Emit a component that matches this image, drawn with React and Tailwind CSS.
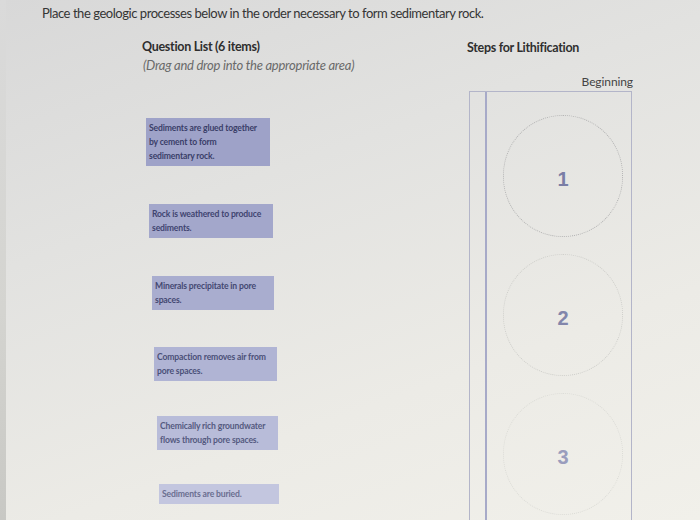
import React from "react";

const items = [
  { lines: ["Sediments are glued together", "by cement to form", "sedimentary rock."], cls: "ml-[4px] mt-[45px] w-[124px] bg-[#9ea2c8] text-[#3a3e68]" },
  { lines: ["Rock is weathered to produce", "sediments."], cls: "ml-[7px] mt-[38px] w-[124px] bg-[#a3a7cb] text-[#3f4470]" },
  { lines: ["Minerals precipitate in pore", "spaces."], cls: "ml-[10px] mt-[38px] w-[122px] bg-[#a9adcf] text-[#444872]" },
  { lines: ["Compaction removes air from", "pore spaces."], cls: "ml-[12px] mt-[37px] w-[123px] bg-[#b0b4d4] text-[#4b5078]" },
  { lines: ["Chemically rich groundwater", "flows through pore spaces."], cls: "ml-[15px] mt-[35px] w-[121px] bg-[#b8bcd9] text-[#555a80]" },
  { lines: ["Sediments are buried."], cls: "ml-[17px] mt-[34px] w-[120px] bg-[#c3c6df] text-[#6a6e90]" },
];

const steps = [
  { n: "1", ring: "border-[#b4b4b4]", num: "text-[#7a7ea6]" },
  { n: "2", ring: "border-[#cfcfcb]", num: "text-[#8286ab]" },
  { n: "3", ring: "border-[#dcdcd7]", num: "text-[#9a9dbd]" },
];

function Card({ lines, cls }) {
  return (
    <div className={`px-[3px] py-[3px] text-[8.6px] font-bold leading-[14px] tracking-[-0.15px] whitespace-nowrap ${cls}`}>
      {lines.map((l, i) => (
        <div key={i}>{l}</div>
      ))}
    </div>
  );
}

function Step({ n, ring, num }) {
  return (
    <div className={`ml-[16px] flex h-[122px] w-[120px] items-center justify-center rounded-full border border-dotted ${ring}`}>
      <span className={`mt-[6px] text-[20px] font-bold font-['Liberation_Sans',sans-serif] ${num}`}>{n}</span>
    </div>
  );
}

export default function App() {
  return (
    <div className="relative h-[520px] w-[700px] overflow-hidden bg-[linear-gradient(160deg,#d8d8d8_0%,#e2e2e0_35%,#ecebe6_70%,#f1f0ea_100%)] font-['Lato',sans-serif]">
      <div className="flex h-full">
        <div className="w-[6px] shrink-0 bg-[linear-gradient(180deg,#dadada_0%,#d4d4d0_60%,#c8c8c4_100%)]" />
        <div className="flex min-w-0 flex-1 flex-col">
          <h1 className="pl-[36px] pt-[5px] text-[13px] leading-[16px] tracking-[-0.45px] text-[#353535]">
            Place the geologic processes below in the order necessary to form sedimentary rock.
          </h1>

          <div className="flex flex-1">
            {/* draggable items */}
            <div className="ml-[136px] flex w-[306px] flex-col pt-[18px]">
              <div className="text-[12.5px] font-bold leading-[16px] tracking-[-0.3px] text-[#2e2e2e]">Question List (6 items)</div>
              <div className="ml-[1px] mt-[2px] text-[13px] italic leading-[16px] tracking-[-0.25px] text-[#6a6a6a]">
                (Drag and drop into the appropriate area)
              </div>
              {items.map((it, i) => (
                <Card key={i} {...it} />
              ))}
            </div>

            {/* ordered drop zone */}
            <div className="ml-[19px] flex w-[166px] flex-col pt-[19px]">
              <div className="text-[12.5px] font-bold leading-[16px] tracking-[-0.3px] text-[#2f2f2f]">Steps for Lithification</div>
              <div className="mt-[18px] text-right text-[12px] leading-[16px] tracking-[-0.1px] text-[#444]">Beginning</div>
              <div className="ml-[2px] mt-[1px] flex w-[163px] flex-1 border-l border-r border-t border-[#b3b5c9]">
                <div className="w-[15px] shrink-0" />
                <div className="w-[2px] shrink-0 bg-[#a7aac8]" />
                <div className="flex flex-col gap-[17px] pt-[23px]">
                  {steps.map((s) => (
                    <Step key={s.n} {...s} />
                  ))}
                </div>
              </div>
            </div>
          </div>
        </div>
      </div>
    </div>
  );
}
